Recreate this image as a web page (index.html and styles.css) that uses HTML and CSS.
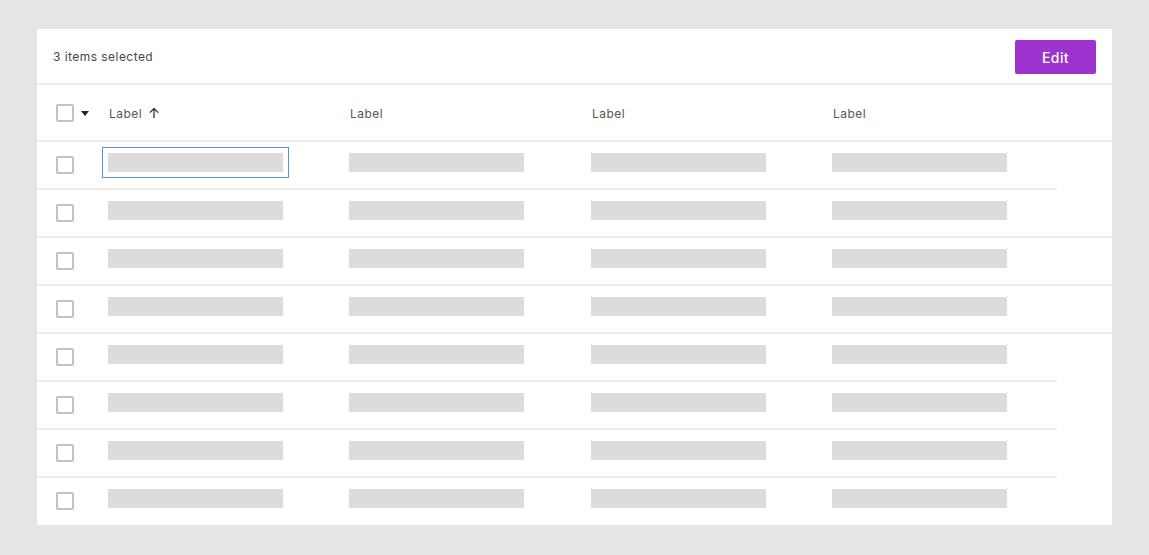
FILE: index.html
```html
<!DOCTYPE html>
<html lang="en">
<head>
  <meta charset="UTF-8" />
  <title>Data table</title>
  <meta name="viewport" content="width=device-width, initial-scale=1" />
  <link rel="stylesheet" href="styles.css">
</head>
<body>
  <div class="card">
    <div class="toolbar">
      <span class="selected">3 items selected</span>
      <button class="edit-btn">Edit</button>
    </div>

    <div class="row head">
      <div class="select">
        <span class="box"></span>
        <span class="caret"></span>
      </div>
      <div class="cols">
        <div class="label">Label
          <svg class="arrow" width="12" height="12" viewBox="0 0 12 12"><path d="M6 11V1.5M1.8 5.7L6 1.5l4.2 4.2" fill="none" stroke="#222" stroke-width="1.2"/></svg>
        </div>
        <div class="label">Label</div>
        <div class="label">Label</div>
        <div class="label">Label</div>
      </div>
    </div>

    <div class="row short">
      <div class="select"><span class="box"></span></div>
      <div class="cols">
        <div><span class="bar focus"></span></div>
        <div><span class="bar"></span></div>
        <div><span class="bar"></span></div>
        <div><span class="bar"></span></div>
      </div>
    </div>
    <div class="row">
      <div class="select"><span class="box"></span></div>
      <div class="cols">
        <div><span class="bar"></span></div>
        <div><span class="bar"></span></div>
        <div><span class="bar"></span></div>
        <div><span class="bar"></span></div>
      </div>
    </div>
    <div class="row">
      <div class="select"><span class="box"></span></div>
      <div class="cols">
        <div><span class="bar"></span></div>
        <div><span class="bar"></span></div>
        <div><span class="bar"></span></div>
        <div><span class="bar"></span></div>
      </div>
    </div>
    <div class="row">
      <div class="select"><span class="box"></span></div>
      <div class="cols">
        <div><span class="bar"></span></div>
        <div><span class="bar"></span></div>
        <div><span class="bar"></span></div>
        <div><span class="bar"></span></div>
      </div>
    </div>
    <div class="row short">
      <div class="select"><span class="box"></span></div>
      <div class="cols">
        <div><span class="bar"></span></div>
        <div><span class="bar"></span></div>
        <div><span class="bar"></span></div>
        <div><span class="bar"></span></div>
      </div>
    </div>
    <div class="row short">
      <div class="select"><span class="box"></span></div>
      <div class="cols">
        <div><span class="bar"></span></div>
        <div><span class="bar"></span></div>
        <div><span class="bar"></span></div>
        <div><span class="bar"></span></div>
      </div>
    </div>
    <div class="row short">
      <div class="select"><span class="box"></span></div>
      <div class="cols">
        <div><span class="bar"></span></div>
        <div><span class="bar"></span></div>
        <div><span class="bar"></span></div>
        <div><span class="bar"></span></div>
      </div>
    </div>
    <div class="row last">
      <div class="select"><span class="box"></span></div>
      <div class="cols">
        <div><span class="bar"></span></div>
        <div><span class="bar"></span></div>
        <div><span class="bar"></span></div>
        <div><span class="bar"></span></div>
      </div>
    </div>
  </div>
</body>
</html>
```

FILE: styles.css
```css
body {
  margin: 0;
  padding: 29px 37px;
  background: #e5e5e5;
  font-family: 'Inter', 'Roboto', sans-serif;
}
.card {
  width: 1075px;
  height: 496px;
  background: #fff;
  overflow: hidden;
}
.toolbar {
  height: 54px;
  display: flex;
  align-items: center;
  justify-content: space-between;
  padding: 0 16px;
  border-bottom: 2px solid #ececec;
}
.selected {
  font-size: 12px;
  letter-spacing: 0.45px;
  color: #484848;
  margin-top: 1px;
}
.edit-btn {
  width: 81px;
  height: 34px;
  margin-top: 2px;
  border: none;
  border-radius: 2px;
  background: #9c33cf;
  color: #fff;
  font-family: 'Inter', sans-serif;
  font-size: 14px;
  font-weight: 500;
  letter-spacing: 0.4px;
}
.row {
  display: flex;
  align-items: center;
  height: 46px;
  border-bottom: 2px solid #ececec;
}
.row.head {
  height: 55px;
}
.row.short {
  margin-right: 55px;
}
.row.last {
  border-bottom: none;
}
.select {
  flex: none;
  width: 71px;
  padding-left: 19px;
  box-sizing: border-box;
  display: flex;
  align-items: center;
  gap: 7px;
}
.box {
  width: 18px;
  height: 18px;
  box-sizing: border-box;
  border: 2px solid #c2c2c2;
  border-radius: 2px;
}
.caret {
  width: 0;
  height: 0;
  border-left: 4.5px solid transparent;
  border-right: 4.5px solid transparent;
  border-top: 5px solid #222;
  margin-top: 1px;
}
.cols {
  flex: none;
  display: grid;
  grid-template-columns: 241px 242px 241px 241px;
  align-items: center;
}
.label {
  font-size: 12px;
  letter-spacing: 0.45px;
  color: #555;
  display: flex;
  align-items: center;
  gap: 6px;
  margin-top: 1px;
  padding-left: 1px;
}
.bar {
  display: block;
  width: 175px;
  height: 19px;
  margin-bottom: 5px;
  background: #dcdcdc;
}
.bar.focus {
  outline: 1.5px solid #5b8fe0;
  outline-offset: 5px;
}
```
